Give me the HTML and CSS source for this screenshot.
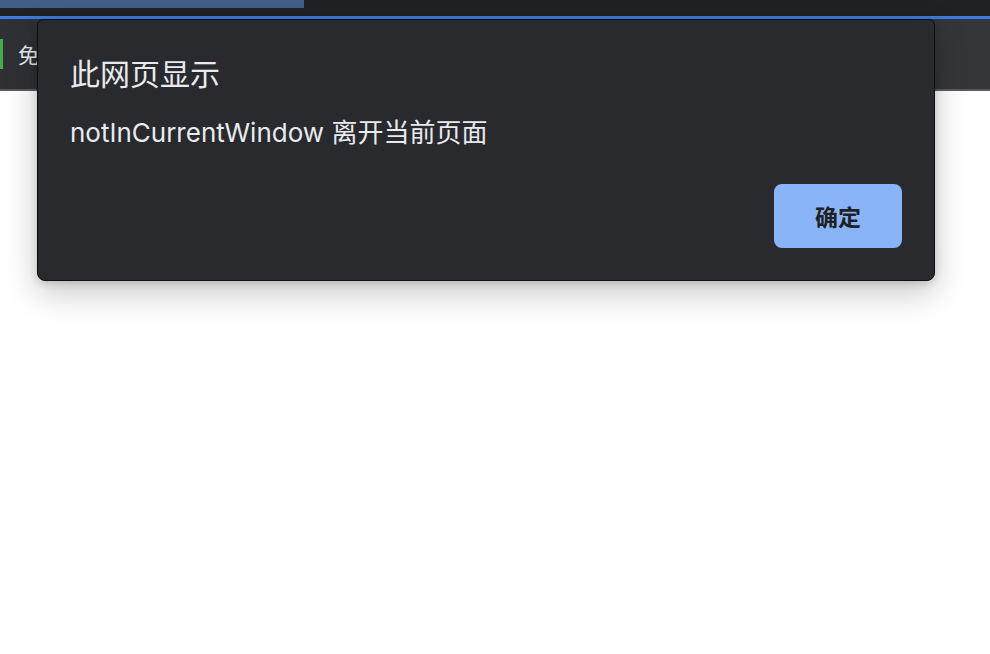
FILE: index.html
```html
<!DOCTYPE html>
<html lang="zh-CN">
<head>
<meta charset="utf-8">
<title>此网页显示</title>
<link rel="stylesheet" href="styles.css">
</head>
<body>
<div class="browser">
  <div class="topbar"><div class="tab"></div></div>
  <div class="accent"></div>
  <div class="toolbar">
    <span class="marker"></span>
    <span class="label">免</span>
  </div>
  <div class="page"></div>
</div>
<div class="dialog" role="alertdialog">
  <div class="dialog-title">此网页显示</div>
  <div class="dialog-message">notInCurrentWindow 离开当前页面</div>
  <div class="dialog-actions">
    <button class="btn-ok">确定</button>
  </div>
</div>
</body>
</html>
```
FILE: styles.css
```css
html, body {
  margin: 0;
  padding: 0;
  background: #ffffff;
  font-family: "Inter", "Noto Sans CJK SC", sans-serif;
}
.browser {
  display: flex;
  flex-direction: column;
  width: 990px;
  height: 654px;
}
.topbar {
  height: 16px;
  background: #202124;
}
.tab {
  width: 304px;
  height: 8px;
  background: #3f5f86;
}
.accent {
  height: 3px;
  background: #3c7be2;
}
.toolbar {
  height: 70px;
  background: linear-gradient(90deg, #2f3033 0%, #35363a 100%);
  border-bottom: 2px solid #5a5b5e;
  display: flex;
  align-items: center;
  gap: 15px;
}
.marker {
  width: 3px;
  height: 30px;
  background: #3fae4a;
}
.label {
  color: #e8eaed;
  font-size: 21px;
  font-family: "Noto Sans CJK SC", sans-serif;
}
.page {
  flex: 1;
  background: #ffffff;
}
.dialog {
  position: absolute;
  left: 37px;
  top: 19px;
  width: 898px;
  height: 262px;
  box-sizing: border-box;
  background: #292a2d;
  border: 1px solid #0e0e10;
  border-radius: 6px 6px 8px 8px;
  box-shadow: 0 12px 32px rgba(0, 0, 0, 0.22), 0 2px 8px rgba(0, 0, 0, 0.15);
  display: flex;
  flex-direction: column;
  padding: 0 32px 32px 32px;
}
.dialog-title {
  color: #e8eaed;
  font-family: "Noto Sans CJK SC", sans-serif;
  font-size: 30px;
  line-height: 40px;
  margin-top: 32px;
}
.dialog-message {
  color: #e8eaed;
  font-size: 26px;
  line-height: 34px;
  margin-top: 24px;
}
.dialog-actions {
  margin-top: auto;
  display: flex;
  justify-content: flex-end;
}
.btn-ok {
  width: 128px;
  height: 64px;
  border: none;
  border-radius: 8px;
  background: #8ab4f8;
  color: #202124;
  font-family: "Noto Sans CJK SC", sans-serif;
  font-weight: 700;
  font-size: 23px;
  padding: 0;
}
```
